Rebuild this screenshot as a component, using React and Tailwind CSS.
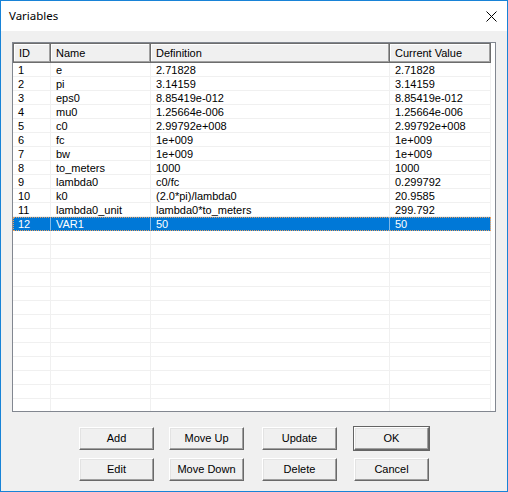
import React from "react";

const cols = [
  { key: "id", label: "ID", w: "w-[38px]" },
  { key: "name", label: "Name", w: "w-[100px]" },
  { key: "def", label: "Definition", w: "w-[239px]" },
  { key: "val", label: "Current Value", w: "w-[101px]" },
];

const rows = [
  ["1", "e", "2.71828", "2.71828"],
  ["2", "pi", "3.14159", "3.14159"],
  ["3", "eps0", "8.85419e-012", "8.85419e-012"],
  ["4", "mu0", "1.25664e-006", "1.25664e-006"],
  ["5", "c0", "2.99792e+008", "2.99792e+008"],
  ["6", "fc", "1e+009", "1e+009"],
  ["7", "bw", "1e+009", "1e+009"],
  ["8", "to_meters", "1000", "1000"],
  ["9", "lambda0", "c0/fc", "0.299792"],
  ["10", "k0", "(2.0*pi)/lambda0", "20.9585"],
  ["11", "lambda0_unit", "lambda0*to_meters", "299.792"],
  ["12", "VAR1", "50", "50"],
];

function Button({ label, primary, className }) {
  return (
    <button
      className={
        "w-[75px] h-[23px] flex items-center justify-center bg-[#f0f0f0] text-black text-[11px] border border-t-white border-l-white border-r-[#696969] border-b-[#696969] shadow-[inset_-1px_-1px_#a0a0a0,inset_1px_1px_#e3e3e3] " +
        (primary ? "outline outline-1 outline-[#646464] " : "") +
        (className || "")
      }
    >
      {label}
    </button>
  );
}

export default function App() {
  const empty = Array.from({ length: 14 });
  return (
    <div
      className="w-[508px] h-[492px] border border-[#1883d7] flex flex-col overflow-hidden"
      style={{ fontFamily: '"Liberation Sans", Arial, sans-serif' }}
    >
      {/* title bar */}
      <div className="h-[30px] bg-white flex items-center justify-between shrink-0">
        <span className="pl-[8px] text-[11.5px] text-black" style={{ fontFamily: '"Noto Sans", "Open Sans", sans-serif' }}>
          Variables
        </span>
        <svg width="46" height="30" viewBox="0 0 46 30">
          <path d="M25.5 10.5 L35.5 20.5 M35.5 10.5 L25.5 20.5" stroke="#000" strokeWidth="1" />
        </svg>
      </div>

      <div className="flex-1 bg-[#f0f0f0] pl-[11px] pt-[11px]">
        {/* list view */}
        <div className="w-[484px] h-[370px] border border-[#828790] bg-white overflow-hidden text-[11px] text-black">
          <div className="flex h-[20px]">
            {cols.map((c, i) => (
              <div
                key={c.key}
                className={
                  c.w +
                  " h-[20px] flex items-center pl-[5px] bg-[#f0f0f0] border-t border-b border-r border-[#6d6d6d] shadow-[inset_-1px_-1px_#a0a0a0,inset_1px_1px_#fff] " +
                  (i === 0 ? "border-l" : "")
                }
              >
                {c.label}
              </div>
            ))}
          </div>
          <div>
            {rows.map((r, ri) => {
              const sel = ri === rows.length - 1;
              return (
                <div
                  key={ri}
                  className={
                    "flex h-[14px] w-[478px] " +
                    (sel ? "bg-[#0078d7] text-white outline outline-1 outline-dotted outline-[#e8a060] -outline-offset-1" : "")
                  }
                >
                  {r.map((v, ci) => (
                    <div
                      key={ci}
                      className={
                        cols[ci].w +
                        " h-[14px] leading-[14px] pl-[5px] whitespace-nowrap overflow-hidden border-b border-r " +
                        (sel ? "border-b-[#0078d7] border-r-[#7fb8e8]" : "border-[#f0f0f0]")
                      }
                    >
                      {v}
                    </div>
                  ))}
                </div>
              );
            })}
            {empty.map((_, ei) => (
              <div key={"e" + ei} className="flex h-[14px] w-[478px]">
                {cols.map((c) => (
                  <div key={c.key} className={c.w + " h-[14px] border-b border-r border-[#f0f0f0]"} />
                ))}
              </div>
            ))}
          </div>
        </div>

        {/* buttons */}
        <div className="mt-[15px] flex flex-col gap-[8px]">
          <div className="flex">
            <Button label="Add" className="ml-[67px]" />
            <Button label="Move Up" className="ml-[15px]" />
            <Button label="Update" className="ml-[18px]" />
            <Button label="OK" primary className="ml-[17px]" />
          </div>
          <div className="flex">
            <Button label="Edit" className="ml-[67px]" />
            <Button label="Move Down" className="ml-[15px]" />
            <Button label="Delete" className="ml-[18px]" />
            <Button label="Cancel" className="ml-[17px]" />
          </div>
        </div>
      </div>
    </div>
  );
}
